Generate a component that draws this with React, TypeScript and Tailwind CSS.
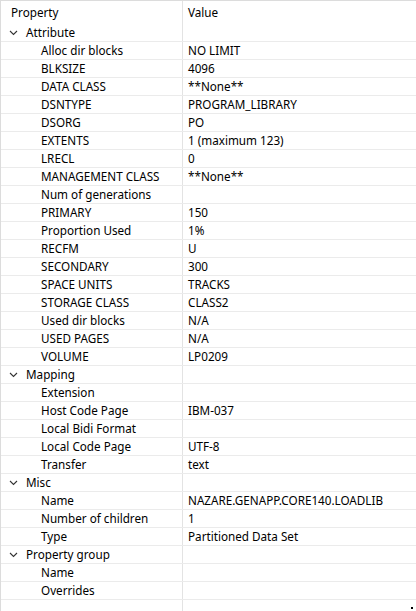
import React from 'react';

type Group = { name: string; rows: [string, string][] };

const GROUPS: Group[] = [
  {
    name: 'Attribute',
    rows: [
      ['Alloc dir blocks', 'NO LIMIT'],
      ['BLKSIZE', '4096'],
      ['DATA CLASS', '**None**'],
      ['DSNTYPE', 'PROGRAM_LIBRARY'],
      ['DSORG', 'PO'],
      ['EXTENTS', '1 (maximum 123)'],
      ['LRECL', '0'],
      ['MANAGEMENT CLASS', '**None**'],
      ['Num of generations', ''],
      ['PRIMARY', '150'],
      ['Proportion Used', '1%'],
      ['RECFM', 'U'],
      ['SECONDARY', '300'],
      ['SPACE UNITS', 'TRACKS'],
      ['STORAGE CLASS', 'CLASS2'],
      ['Used dir blocks', 'N/A'],
      ['USED PAGES', 'N/A'],
      ['VOLUME', 'LP0209'],
    ],
  },
  {
    name: 'Mapping',
    rows: [
      ['Extension', ''],
      ['Host Code Page', 'IBM-037'],
      ['Local Bidi Format', ''],
      ['Local Code Page', 'UTF-8'],
      ['Transfer', 'text'],
    ],
  },
  {
    name: 'Misc',
    rows: [
      ['Name', 'NAZARE.GENAPP.CORE140.LOADLIB'],
      ['Number of children', '1'],
      ['Type', 'Partitioned Data Set'],
    ],
  },
  {
    name: 'Property group',
    rows: [
      ['Name', ''],
      ['Overrides', ''],
    ],
  },
];

function Chevron() {
  return (
    <svg width="9" height="6" viewBox="0 0 9 6" className="shrink-0">
      <path d="M1 1 L4.5 4.5 L8 1" fill="none" stroke="#333" strokeWidth="1.1" />
    </svg>
  );
}

function Row({ children, value }: { children?: React.ReactNode; value?: string }) {
  return (
    <div className="flex h-[18px] border-b border-[#ebebeb]">
      <div className="w-[182px] shrink-0 flex items-center pt-[1px] border-r border-[#e3e3e3]">{children}</div>
      <div className="flex-1 flex items-center pt-[1px] pl-[5px] whitespace-nowrap">{value}</div>
    </div>
  );
}

export default function App() {
  return (
    <div
      className="relative w-[416px] h-[611px] overflow-hidden bg-white border-l border-t border-[#dcdcdc] text-[11.7px] text-black"
      style={{ fontFamily: '"Noto Sans", "Open Sans", sans-serif' }}
    >
      {/* Header */}
      <div className="flex h-[23px]">
        <div className="w-[182px] shrink-0 flex items-center pl-[10px] border-r border-[#e3e3e3]">Property</div>
        <div className="flex-1 flex items-center pl-[5px]">Value</div>
      </div>

      {GROUPS.map((g) => (
        <React.Fragment key={g.name}>
          <Row>
            <div className="flex items-center pl-[8px] gap-[8px]">
              <Chevron />
              <span>{g.name}</span>
            </div>
          </Row>
          {g.rows.map(([k, v]) => (
            <Row key={g.name + k} value={v}>
              <span className="pl-[40px] whitespace-nowrap">{k}</span>
            </Row>
          ))}
        </React.Fragment>
      ))}
      <Row />

      <div className="absolute right-[3px] bottom-[2px] w-[2px] h-[2px] bg-black" />
    </div>
  );
}
